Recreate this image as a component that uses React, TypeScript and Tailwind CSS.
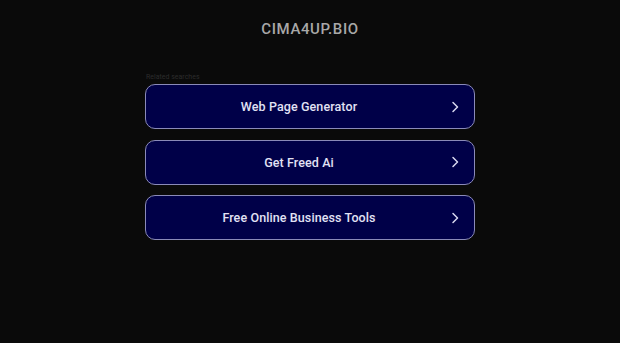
import React from 'react';

const LINKS = ['Web Page Generator', 'Get Freed Ai', 'Free Online Business Tools'];

const Chevron: React.FC = () => (
  <svg width="8" height="12" viewBox="0 0 8 12" fill="none" className="absolute right-[15px] top-1/2 -translate-y-1/2">
    <path d="M2 1.5 L6.5 6 L2 10.5" stroke="#d8d8f0" strokeWidth="1.5" strokeLinecap="round" strokeLinejoin="round" />
  </svg>
);

const App: React.FC = () => {
  return (
    <div className="w-[620px] h-[343px] bg-[#0a0a0a] font-['Roboto','Liberation_Sans',Arial,sans-serif] flex flex-col items-center">
      <h1 className="mt-[20px] text-[15px] leading-[18px] font-medium text-[#a8a8a8] tracking-[0.6px]">CIMA4UP.BIO</h1>

      <div className="w-[330px] mt-[35px]">
        <p className="text-[7px] leading-[9px] text-[#2c2c2c] ml-[1px] mb-[2px]">Related searches</p>
        <div className="flex flex-col gap-[10.5px]">
          {LINKS.map(label => (
            <a
              key={label}
              href="#"
              className="relative h-[45px] rounded-[10px] border border-[#8a8ab8] bg-[#000048] flex items-center justify-center pt-[2px] pr-[22px] text-[12.5px] font-medium text-[#e2e2f4] tracking-[0.1px]"
            >
              {label}
              <Chevron />
            </a>
          ))}
        </div>
      </div>
    </div>
  );
};

export default App;
